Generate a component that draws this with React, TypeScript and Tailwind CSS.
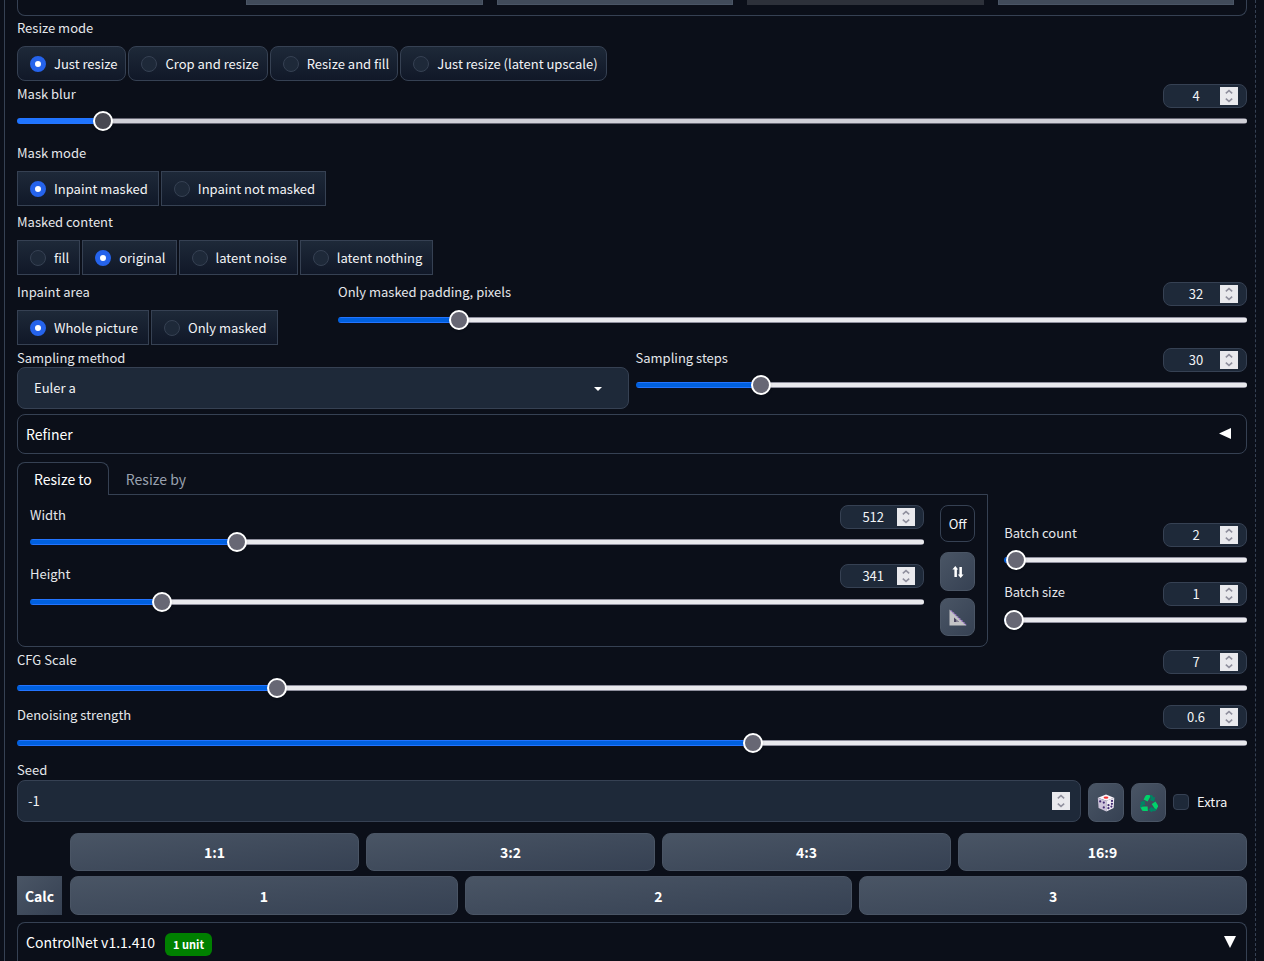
import { useId, useState } from "react";
import type { CSSProperties, ReactNode } from "react";

/* ── small shared pieces ── */

function Spinner() {
  return (
    <svg aria-hidden="true" viewBox="0 0 18 18" className="pointer-events-none size-[18px] shrink-0 bg-[#e9e9ed]">
      <path d="M5.8 6.4 9 3.6l3.2 2.8M5.8 11.6 9 14.4l3.2-2.8" fill="none" stroke="#8f8f9d" strokeWidth="1.5" />
    </svg>
  );
}

const hideNativeSpin =
  "[appearance:textfield] [&::-webkit-inner-spin-button]:appearance-none [&::-webkit-outer-spin-button]:appearance-none";

type SliderProps = {
  label: string;
  initial: number;
  min: number;
  max: number;
  step?: number;
  tight?: boolean;
  active?: boolean;
};

function Slider({ label, initial, min, max, step = 1, tight = false, active = false }: SliderProps) {
  const id = useId();
  const [value, setValue] = useState(initial);
  const ratio = (value - min) / (max - min);
  // the fill ends under the middle of the 20px thumb
  const fill = { "--fill": `calc(10px + (100% - 20px) * ${ratio})` } as CSSProperties;

  const tone = active
    ? "[--on:#1f74ff] [--off:#d0d0d7] [--edge:#676774] [--knob:#484851]"
    : "[--on:#0060df] [--off:#e9e9ed] [--edge:#8f8f9d] [--knob:#676774]";

  return (
    <div className={`flex flex-col ${tight ? "gap-[3px]" : "gap-1"}`}>
      <div className="flex h-6 items-start justify-between">
        <label htmlFor={id} className="text-[13px] leading-5 text-gray-200">
          {label}
        </label>
        <div className="flex h-6 w-[84px] items-center rounded-lg border border-gray-700 bg-gray-800 pr-2 pl-2">
          <input
            type="number"
            aria-label={`${label} value`}
            value={value}
            min={min}
            max={max}
            step={step}
            onChange={(e) => setValue(Number(e.target.value))}
            className={`h-5 w-full min-w-0 bg-transparent text-center text-[13px] leading-5 text-gray-100 outline-none ${hideNativeSpin}`}
          />
          <Spinner />
        </div>
      </div>
      <input
        id={id}
        type="range"
        min={min}
        max={max}
        step={step}
        value={value}
        onChange={(e) => setValue(Number(e.target.value))}
        style={fill}
        className={`
          block h-5 w-full appearance-none bg-transparent outline-none ${tone}
          [&::-webkit-slider-runnable-track]:h-[6px]
          [&::-webkit-slider-runnable-track]:rounded-full
          [&::-webkit-slider-runnable-track]:[background:linear-gradient(to_right,var(--on)_var(--fill),var(--off)_var(--fill))_center/100%_4px_no-repeat,linear-gradient(to_right,#2374ff_var(--fill),var(--edge)_var(--fill))]
          [&::-webkit-slider-thumb]:-mt-[7px]
          [&::-webkit-slider-thumb]:size-5
          [&::-webkit-slider-thumb]:appearance-none
          [&::-webkit-slider-thumb]:rounded-full
          [&::-webkit-slider-thumb]:border-2
          [&::-webkit-slider-thumb]:border-white
          [&::-webkit-slider-thumb]:bg-(--knob)
          [&::-webkit-slider-thumb]:shadow-sm
        `}
      />
    </div>
  );
}

type RadioFieldProps = {
  legend: string;
  options: string[];
  initial: string;
  rounded?: boolean;
};

function RadioField({ legend, options, initial, rounded = false }: RadioFieldProps) {
  const name = useId();
  return (
    <fieldset className="min-w-0">
      <legend className="mb-2 text-[13px] leading-5 text-gray-200">{legend}</legend>
      <div className="flex flex-wrap gap-[2px]">
        {options.map((option) => (
          <label
            key={option}
            className={`flex h-[35px] items-center gap-2 border border-gray-700 bg-linear-to-b from-gray-800 to-gray-900 pl-3 text-[13px] leading-5 text-gray-100 ${
              rounded ? "rounded-lg pr-2" : "pr-2.5"
            }`}
          >
            <input
              type="radio"
              name={name}
              defaultChecked={option === initial}
              className="size-4 shrink-0 appearance-none rounded-full border border-gray-700 bg-gray-800 checked:border-[5px] checked:border-[#2563eb] checked:bg-white"
            />
            {option}
          </label>
        ))}
      </div>
    </fieldset>
  );
}

function ToolButton({ label, className, children }: { label: string; className: string; children: ReactNode }) {
  return (
    <button
      type="button"
      aria-label={label}
      className={`flex shrink-0 items-center justify-center rounded-lg border border-gray-600 bg-linear-to-br from-gray-600 to-gray-700 ${className}`}
    >
      {children}
    </button>
  );
}

function WideButton({ children }: { children: ReactNode }) {
  return (
    <button
      type="button"
      className="h-full rounded-lg border border-gray-600 bg-linear-to-br from-gray-600 to-gray-700 text-[14px] leading-5 font-bold text-white"
    >
      {children}
    </button>
  );
}

/* ── icons ── */

function SwapIcon() {
  return (
    <svg viewBox="0 0 12 12" className="size-3" fill="#fff">
      <path d="M3.3 0 6.2 3.6H4.9V11H2.4V3.6H.4zM8.7 12 11.6 8.4H9.9V1H7.4v7.4H5.8z" />
    </svg>
  );
}

function SetSquareIcon() {
  return (
    <svg viewBox="0 0 18 17" className="h-[17px] w-[18px]">
      <path d="M.5.5 17.5 16.5H.5z" fill="#c4c4c6" />
      <path d="M5 8.5 10 13H5z" fill="#4b4660" />
      <path d="M7.2 10.5 10 13H7.2z" fill="#8b8799" />
      <path d="M2 1.7 17 15.8" stroke="#a77fd1" strokeWidth="1.4" strokeDasharray="1.6 1.2" />
    </svg>
  );
}

function DiceIcon() {
  return (
    <svg viewBox="0 0 18 18" className="size-[18px]">
      <path d="M9 .6 17 3.8 9.4 6.8 1 3.8z" fill="#fbf6fd" />
      <path d="M.8 3.8 9.4 6.8v10.6L1.6 14z" fill="#cdc3da" />
      <path d="M9.4 6.8 17.3 3.8l-.7 10.2-7.2 3.4z" fill="#f1ecf6" />
      <ellipse cx="9" cy="3.6" rx="2.4" ry="1.2" fill="#f8312f" />
      <g fill="#402a72">
        <circle cx="3.2" cy="7.4" r="1.1" />
        <circle cx="6.8" cy="8.6" r="1.1" />
        <circle cx="6.8" cy="13.4" r="1.1" />
        <circle cx="15" cy="6.9" r="1.1" />
        <circle cx="14.9" cy="9.8" r="1.1" />
        <circle cx="14.4" cy="12.6" r="1.1" />
        <circle cx="11.5" cy="11.2" r="1.1" />
        <circle cx="11.4" cy="14.2" r="1.1" />
      </g>
    </svg>
  );
}

function RecycleArrow({ turn }: { turn: string }) {
  return (
    <g transform={turn}>
      <path d="M6.6.9h4.6L9 5 7.6 7.6 3.6 5.6 5.4 2z" fill="#00d26a" />
      <path d="M9.6.9h1.6q.8 0 1.2.7l1.1 2 1.5-.8-.8 5-4.8-1.9 1.5-.8z" fill="#008463" />
    </g>
  );
}

function RecycleIcon() {
  return (
    <svg viewBox="0 0 18 18" className="size-[18px]">
      <RecycleArrow turn="rotate(0 9 10)" />
      <RecycleArrow turn="rotate(120 9 10)" />
      <RecycleArrow turn="rotate(240 9 10)" />
    </svg>
  );
}

/* ── sections ── */

function PreviousPanel() {
  return (
    <div className="h-4 rounded-b-lg border border-t-0 border-gray-700 pr-3 pl-[228px]">
      <div className="grid h-[5px] grid-cols-4 gap-[14px]">
        <div className="border border-t-0 border-gray-600 bg-[#414b5a]" />
        <div className="border border-t-0 border-gray-600 bg-[#414b5a]" />
        <div className="bg-[#2d313a]" />
        <div className="border border-t-0 border-gray-600 bg-[#414b5a]" />
      </div>
    </div>
  );
}

function SizePanel() {
  return (
    <div className="mt-2 flex gap-4">
      <div className="min-w-0 flex-4">
        <div role="tablist" className="relative -mb-px flex">
          <button
            type="button"
            role="tab"
            aria-selected="true"
            className="h-[33px] rounded-t-lg border border-b-0 border-gray-700 bg-[#0b0f19] px-4 text-[14px] leading-5 text-white"
          >
            Resize to
          </button>
          <button
            type="button"
            role="tab"
            aria-selected="false"
            className="h-[33px] border border-transparent px-4 text-[14px] leading-5 text-gray-400"
          >
            Resize by
          </button>
        </div>
        <div role="tabpanel" className="flex gap-4 rounded-b-lg border border-gray-700 px-3 py-2.5">
          <div className="flex min-w-0 flex-1 flex-col gap-3">
            <Slider label="Width" initial={512} min={64} max={2048} tight />
            <Slider label="Height" initial={341} min={64} max={2048} />
          </div>
          <div className="flex w-[35px] flex-col">
            <button type="button" className="h-[37px] rounded-lg border border-gray-700 text-[13px] leading-5 text-gray-100">
              Off
            </button>
            <ToolButton label="Switch width and height" className="mt-2.5 h-[39px]">
              <SwapIcon />
            </ToolButton>
            <ToolButton label="Detect image size" className="mt-[7px] h-[38px]">
              <SetSquareIcon />
            </ToolButton>
          </div>
        </div>
      </div>
      <div className="flex min-w-0 flex-1 flex-col gap-3 pt-[61px]">
        <Slider label="Batch count" initial={2} min={1} max={100} tight />
        <Slider label="Batch size" initial={1} min={1} max={8} />
      </div>
    </div>
  );
}

function SeedRow() {
  return (
    <div className="mt-[7px]">
      <label htmlFor="seed" className="block text-[13px] leading-5 text-gray-200">
        Seed
      </label>
      <div className="flex items-end gap-[7px]">
        <div className="flex h-[42px] flex-1 items-center rounded-lg border border-gray-700 bg-gray-800 px-2.5">
          <input
            id="seed"
            type="number"
            defaultValue={-1}
            className={`w-full min-w-0 bg-transparent text-[13px] leading-5 text-gray-100 outline-none ${hideNativeSpin}`}
          />
          <Spinner />
        </div>
        <ToolButton label="Random seed" className="h-[39px] w-9">
          <DiceIcon />
        </ToolButton>
        <ToolButton label="Reuse last seed" className="h-[39px] w-[35px]">
          <RecycleIcon />
        </ToolButton>
        <label className="flex h-10 w-[74px] items-center gap-2 text-[13px] leading-5 text-gray-100">
          <input
            type="checkbox"
            className="size-4 appearance-none rounded-sm border border-gray-700 bg-gray-800 checked:bg-[#2563eb]"
          />
          Extra
        </label>
      </div>
    </div>
  );
}

export default function App() {
  return (
    <div className="min-h-screen overflow-hidden bg-[#0b0f19] font-['Noto_Sans_CJK_SC','Open_Sans',sans-serif]">
      <main className="mr-2 ml-1 min-h-screen border-r border-l border-gray-700 [border-right-style:dashed] pr-2 pl-3">
        <PreviousPanel />

        <div className="mt-[2px]">
          <RadioField
            legend="Resize mode"
            options={["Just resize", "Crop and resize", "Resize and fill", "Just resize (latent upscale)"]}
            initial="Just resize"
            rounded
          />
        </div>
        <div className="mt-[3px]">
          <Slider label="Mask blur" initial={4} min={0} max={64} tight active />
        </div>
        <div className="mt-3">
          <RadioField legend="Mask mode" options={["Inpaint masked", "Inpaint not masked"]} initial="Inpaint masked" />
        </div>
        <div className="mt-1.5">
          <RadioField
            legend="Masked content"
            options={["fill", "original", "latent noise", "latent nothing"]}
            initial="original"
          />
        </div>
        <div className="mt-[7px] grid grid-cols-[1fr_3fr] gap-[18px]">
          <RadioField legend="Inpaint area" options={["Whole picture", "Only masked"]} initial="Whole picture" />
          <Slider label="Only masked padding, pixels" initial={32} min={0} max={256} />
        </div>

        {/* Sampler */}
        <div className="mt-[3px] grid grid-cols-2 gap-[7px]">
          <div>
            <label htmlFor="sampler" className="block h-[19px] text-[13px] leading-5 text-gray-200">
              Sampling method
            </label>
            <div className="relative">
              <select
                id="sampler"
                className="block h-[42px] w-full appearance-none rounded-lg border border-gray-700 bg-gray-800 px-4 text-[13px] leading-5 text-gray-100"
              >
                <option>Euler a</option>
              </select>
              <svg
                aria-hidden="true"
                viewBox="0 0 8 4"
                className="pointer-events-none absolute top-5 right-[27px] h-1 w-2"
                fill="#fff"
              >
                <path d="M0 0h8L4 4z" />
              </svg>
            </div>
          </div>
          <Slider label="Sampling steps" initial={30} min={1} max={150} tight />
        </div>

        <button
          type="button"
          className="mt-[5px] flex h-10 w-full items-center justify-between rounded-lg border border-gray-700 pr-[15px] pl-2 text-[14px] leading-5 text-white"
        >
          Refiner
          <svg aria-hidden="true" viewBox="0 0 12 12" className="size-3" fill="#fff">
            <path d="M0 5.5 12 0v11z" />
          </svg>
        </button>

        <SizePanel />

        <div className="mt-[3px] flex flex-col gap-[7px]">
          <Slider label="CFG Scale" initial={7} min={1} max={30} step={0.5} />
          <Slider label="Denoising strength" initial={0.6} min={0} max={1} step={0.01} />
        </div>

        <SeedRow />

        {/* Aspect ratio presets */}
        <div className="mt-[11px] ml-[53px] grid h-[38px] grid-cols-4 gap-[7px]">
          <WideButton>1:1</WideButton>
          <WideButton>3:2</WideButton>
          <WideButton>4:3</WideButton>
          <WideButton>16:9</WideButton>
        </div>
        <div className="mt-[5px] flex h-[39px] gap-2">
          <button
            type="button"
            className="w-[45px] bg-linear-to-br from-gray-600 to-gray-700 text-[14px] leading-5 font-bold text-white"
          >
            Calc
          </button>
          <div className="grid flex-1 grid-cols-3 gap-[7px]">
            <WideButton>1</WideButton>
            <WideButton>2</WideButton>
            <WideButton>3</WideButton>
          </div>
        </div>

        <button
          type="button"
          className="mt-[7px] flex h-[39px] w-full items-center rounded-t-lg border border-b-0 border-gray-700 px-2 text-[14px] leading-5 text-white"
        >
          ControlNet v1.1.410
          <span className="mt-1 ml-2.5 rounded-md bg-[#008000] px-2 text-[11px] leading-[23px] font-bold">1 unit</span>
          <svg aria-hidden="true" viewBox="0 0 12 12" className="mr-[2px] ml-auto size-3" fill="#fff">
            <path d="M0 0h12L6 12z" />
          </svg>
        </button>
      </main>
    </div>
  );
}
